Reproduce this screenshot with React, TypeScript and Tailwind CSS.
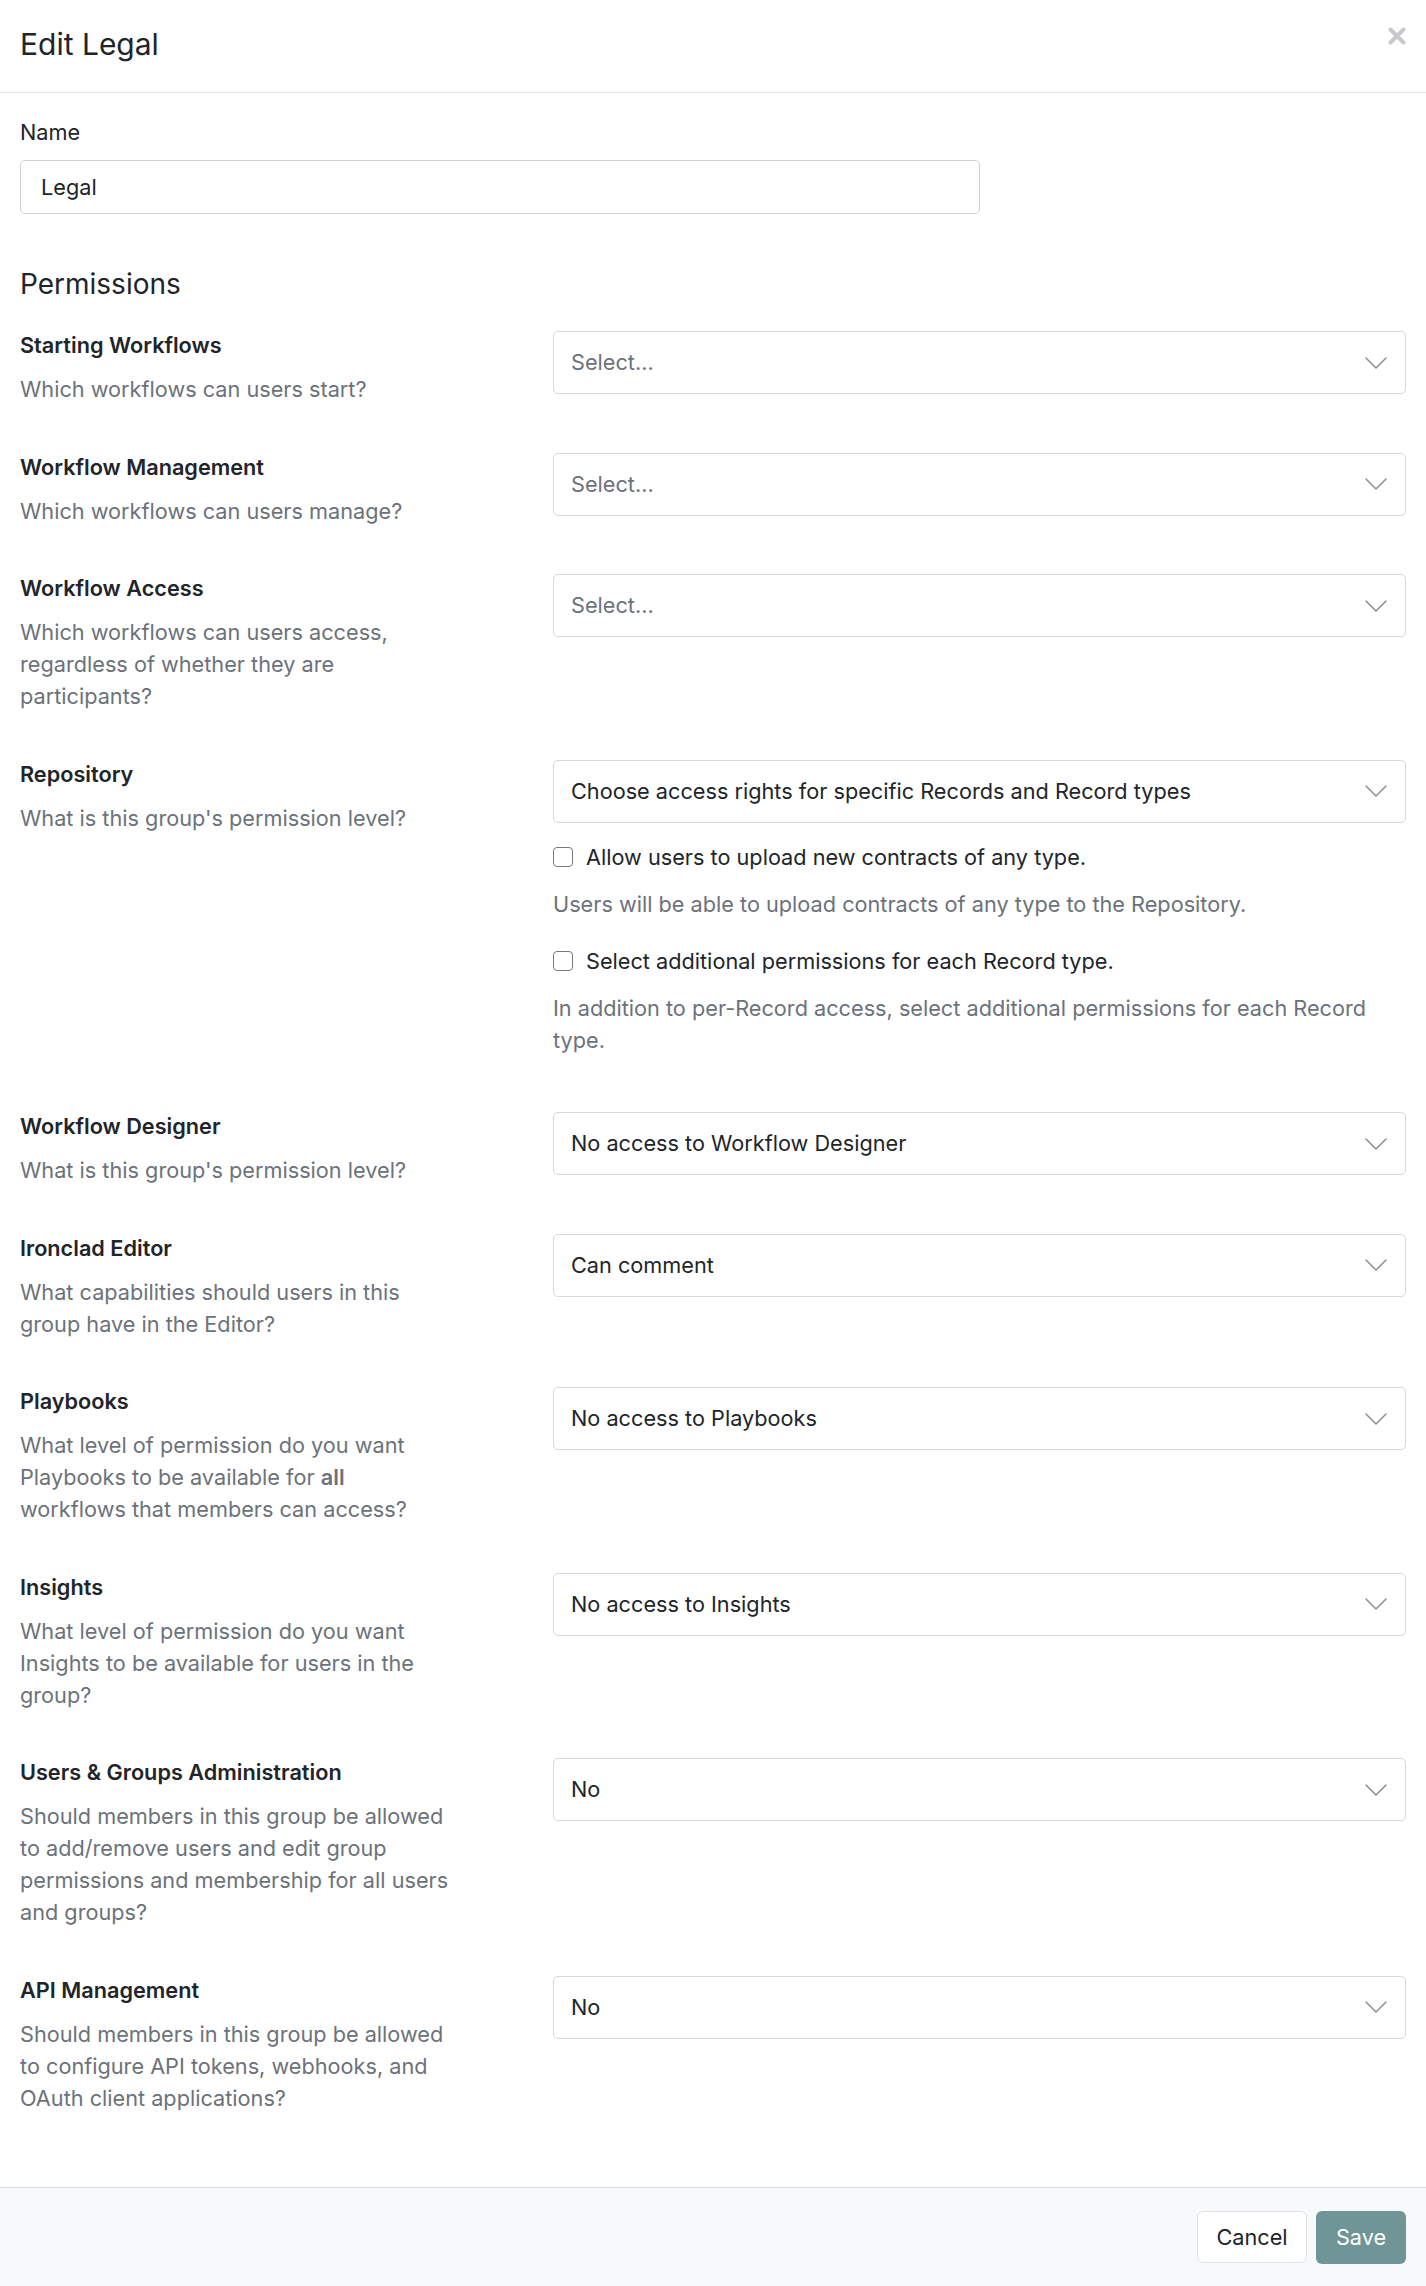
import React from "react";

type Row = {
  title: string;
  desc: React.ReactNode;
  value: string;
  placeholder?: boolean;
  extra?: React.ReactNode;
};

function Chevron() {
  return (
    <svg width="22" height="12" viewBox="0 0 22 12" fill="none" className="shrink-0">
      <path d="M1 1l10 10L21 1" stroke="#8a8f95" strokeWidth="1.5" strokeLinecap="round" strokeLinejoin="round" />
    </svg>
  );
}

function SelectBox({ value, placeholder }: { value: string; placeholder?: boolean }) {
  return (
    <div className="flex h-[63px] items-center justify-between rounded-[5px] border border-[#d6d9dc] bg-white pl-[17px] pr-[18px]">
      <span className={placeholder ? "text-[#6c727a]" : "text-[#212529]"}>{value}</span>
      <Chevron />
    </div>
  );
}

function Checkbox({ label }: { label: string }) {
  return (
    <label className="flex items-center gap-[13px] leading-[32px] text-[#212529]">
      <span className="h-[20px] w-[20px] shrink-0 rounded-[4px] border-[1.5px] border-[#767b82] bg-white" />
      {label}
    </label>
  );
}

const ROWS: Row[] = [
  { title: "Starting Workflows", desc: "Which workflows can users start?", value: "Select...", placeholder: true },
  { title: "Workflow Management", desc: "Which workflows can users manage?", value: "Select...", placeholder: true },
  {
    title: "Workflow Access",
    desc: "Which workflows can users access, regardless of whether they are participants?",
    value: "Select...",
    placeholder: true,
  },
  {
    title: "Repository",
    desc: "What is this group's permission level?",
    value: "Choose access rights for specific Records and Record types",
    extra: (
      <div className="pb-[9px]">
        <div className="mt-[18px]">
          <Checkbox label="Allow users to upload new contracts of any type." />
        </div>
        <p className="mt-[15px] leading-[32px] text-[#6c727a]">
          Users will be able to upload contracts of any type to the Repository.
        </p>
        <div className="mt-[25px]">
          <Checkbox label="Select additional permissions for each Record type." />
        </div>
        <p className="mt-[15px] leading-[32px] text-[#6c727a]">
          In addition to per-Record access, select additional permissions for each Record type.
        </p>
      </div>
    ),
  },
  { title: "Workflow Designer", desc: "What is this group's permission level?", value: "No access to Workflow Designer" },
  {
    title: "Ironclad Editor",
    desc: "What capabilities should users in this group have in the Editor?",
    value: "Can comment",
  },
  {
    title: "Playbooks",
    desc: (
      <>
        What level of permission do you want Playbooks to be available for <b className="font-semibold">all</b>{" "}
        workflows that members can access?
      </>
    ),
    value: "No access to Playbooks",
  },
  {
    title: "Insights",
    desc: "What level of permission do you want Insights to be available for users in the group?",
    value: "No access to Insights",
  },
  {
    title: "Users & Groups Administration",
    desc: "Should members in this group be allowed to add/remove users and edit group permissions and membership for all users and groups?",
    value: "No",
  },
  {
    title: "API Management",
    desc: "Should members in this group be allowed to configure API tokens, webhooks, and OAuth client applications?",
    value: "No",
  },
];

export default function App() {
  return (
    <div
      className="min-h-[2286px] w-full bg-white text-[21.7px] text-[#212529] flex flex-col"
      style={{ fontFamily: "Inter, 'Noto Sans', 'Liberation Sans', sans-serif" }}
    >
      {/* Header */}
      <div className="flex h-[93px] items-start justify-between border-b border-[#e3e5e8] pl-[20px] pr-[20px]">
        <h2 className="mt-[25px] text-[30px] leading-[38px] font-normal text-[#212529]">Edit Legal</h2>
        <button className="mt-[27px]" aria-label="Close">
          <svg width="18" height="18" viewBox="0 0 18 18">
            <path d="M2.5 2.5l13 13M15.5 2.5l-13 13" stroke="#c7c9cc" strokeWidth="4" strokeLinecap="round" />
          </svg>
        </button>
      </div>

      {/* Body */}
      <div className="flex-1 px-[20px] pt-[24px] pb-[72px]">
        <label className="block leading-[30px] text-[#212529]">Name</label>
        <div className="mt-[13px] flex h-[54px] w-[960px] items-center rounded-[5px] border border-[#cfd3d7] px-[20px]">
          Legal
        </div>

        <h3 className="mt-[53px] text-[28px] leading-[34px] font-normal">Permissions</h3>

        <div className="mt-[29px] flex flex-col gap-[46.5px]">
          {ROWS.map((r) => (
            <div key={r.title} className="grid grid-cols-[533px_1fr]">
              <div className="w-[432px]">
                <div className="font-semibold leading-[30px] text-[#212529]">{r.title}</div>
                <p className="mt-[13px] leading-[32px] text-[#6c727a]">{r.desc}</p>
              </div>
              <div className="pt-[1px]">
                <SelectBox value={r.value} placeholder={r.placeholder} />
                {r.extra}
              </div>
            </div>
          ))}
        </div>
      </div>

      {/* Footer */}
      <div className="flex h-[99px] items-center justify-end gap-[9px] border-t border-[#dcdfe2] bg-[#f8f9fa] px-[20px]">
        <button className="h-[52px] w-[110px] rounded-[6px] border border-[#dee2e6] bg-white text-[#212529]">
          Cancel
        </button>
        <button className="h-[53px] w-[90px] rounded-[6px] bg-[#6f9597] text-white">Save</button>
      </div>
    </div>
  );
}
